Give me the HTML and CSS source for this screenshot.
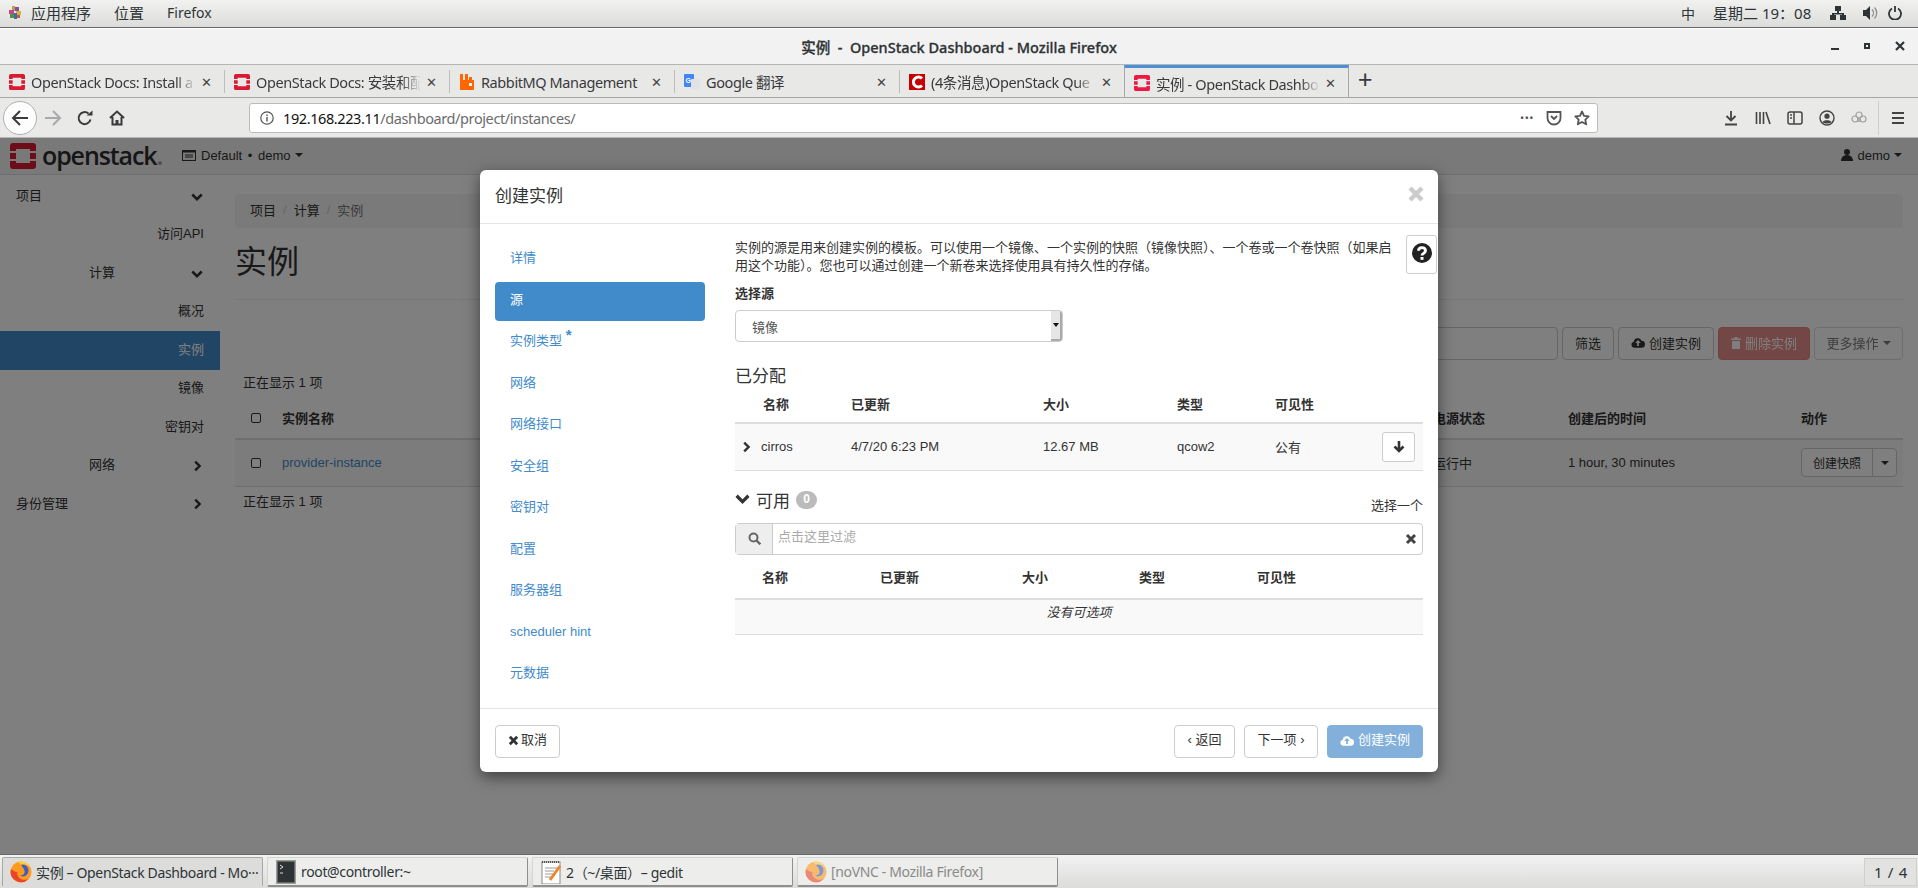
FILE: index.html
```html
<!DOCTYPE html>
<html lang="zh-CN">
<head>
    <meta charset="UTF-8">
    <title>实例 - OpenStack Dashboard</title>
    <link rel="stylesheet" href="styles.css">
</head>
<body>

    <svg class="sprite" width="0" height="0">
        <symbol id="os-logo" viewBox="0 0 26 26">
            <path fill="currentColor" d="M3 0h20a3 3 0 0 1 3 3v5h-6V6H6v2H0V3a3 3 0 0 1 3-3zM0 10h6v6H0zM20 10h6v6h-6zM0 18h6v2h14v-2h6v5a3 3 0 0 1-3 3H3a3 3 0 0 1-3-3z"/>
        </symbol>
        <symbol id="firefox" viewBox="0 0 24 24">
            <circle cx="12" cy="12" r="11.5" fill="#ff9a1f"/>
            <path fill="#e8452c" d="M1 9a11.5 11.5 0 0 0 19 11C13 22 7 18 8 12 5 12 3 10 1 9z"/>
            <path fill="#3b5fc0" d="M12 4c5-1 9 3 8 8-1 4-5 6-9 4 3 0 5-2 5-4 0-3-2-5-4-8z"/>
            <path fill="#ffcf3a" d="M9 1c4-1 10 0 13 6-3-3-7-4-10-3z"/>
        </symbol>
        <symbol id="chev-down" viewBox="0 0 14 10">
            <path fill="none" stroke="currentColor" stroke-width="3" d="M1.5 1.5 7 7l5.5-5.5"/>
        </symbol>
        <symbol id="chev-right" viewBox="0 0 10 14">
            <path fill="none" stroke="currentColor" stroke-width="3" d="M1.5 1.5 7 7l-5.5 5.5"/>
        </symbol>
        <symbol id="cloud-up" viewBox="0 0 16 12">
            <path fill="currentColor" fill-rule="evenodd" d="M4 12a3.5 3.5 0 0 1-.8-6.9A4.6 4.6 0 0 1 12 4a4 4 0 0 1 0 8zM8 3 4.8 6.6H7V10h2V6.6h2.2z"/>
        </symbol>
        <symbol id="times" viewBox="0 0 12 12">
            <path fill="none" stroke="currentColor" stroke-width="3" d="M2 2l8 8M10 2l-8 8"/>
        </symbol>
    </svg>

    <div class="desktop">

        <!-- GNOME top bar -->
        <header class="topbar">
            <svg class="apps-icon" viewBox="0 0 14 14" width="14" height="14">
                <rect x="4" y="0" width="3" height="5" fill="#b9a04a"/>
                <rect x="7" y="1" width="4" height="4" fill="#8a4d9c"/>
                <rect x="1" y="4" width="5" height="4" fill="#c0478a"/>
                <rect x="8" y="5" width="5" height="4" fill="#d8b23a"/>
                <rect x="2" y="8" width="4" height="4" fill="#5a8f3d"/>
                <rect x="6" y="7" width="3" height="6" fill="#3f6bb0"/>
                <rect x="9" y="9" width="3" height="3" fill="#c9583a"/>
            </svg>
            <span class="topbar-menu">应用程序</span>
            <span class="topbar-menu">位置</span>
            <span class="topbar-menu">Firefox</span>
            <div class="topbar-right">
                <span class="ime">中</span>
                <span class="clock">星期二 19：08</span>
                <svg class="tray-net" viewBox="0 0 16 14" width="16" height="14">
                    <path fill="#2e3436" d="M5 0h6v5H9v2h5v2h2v5h-6V9h2V8.500H4V9h2v5H0V9h2V7h5V5H5z"/>
                </svg>
                <svg class="tray-vol" viewBox="0 0 16 14" width="16" height="14">
                    <path fill="#2e3436" d="M0 4h3l4-4v14l-4-4H0z"/>
                    <path fill="none" stroke="#8a8d88" stroke-width="1.300" d="M9 3.500a5 5 0 0 1 0 7M11.500 1.500a8 8 0 0 1 0 11"/>
                </svg>
                <svg class="tray-power" viewBox="0 0 14 14" width="14" height="14">
                    <path fill="none" stroke="#2e3436" stroke-width="1.800" d="M4 2.500a6 6 0 1 0 6 0M7 0v6"/>
                </svg>
            </div>
        </header>

        <!-- Window title -->
        <div class="titlebar">
            <span class="window-title">实例 &nbsp;-&nbsp; OpenStack Dashboard - Mozilla Firefox</span>
            <div class="window-controls">
                <span class="win-min"></span>
                <span class="win-max"></span>
                <svg class="win-close" viewBox="0 0 10 10" width="10" height="10">
                    <path fill="none" stroke="#2e3436" stroke-width="2.200" d="M1 1l8 8M9 1l-8 8"/>
                </svg>
            </div>
        </div>

        <!-- Tabs -->
        <div class="tabstrip">
            <div class="tab">
                <svg class="favicon favicon-os"><use href="#os-logo"/></svg>
                <span class="tab-label">OpenStack Docs: Install a</span>
                <span class="tab-close">✕</span>
            </div>
            <div class="tab">
                <svg class="favicon favicon-os"><use href="#os-logo"/></svg>
                <span class="tab-label">OpenStack Docs: 安装和配</span>
                <span class="tab-close">✕</span>
            </div>
            <div class="tab">
                <svg class="favicon" viewBox="0 0 16 16">
                    <path fill="#f60" d="M1 0h3v6h2V0h3v6h1V3h3v3h2v10H1z"/>
                    <rect x="10" y="9" width="3" height="3" fill="#fff"/>
                </svg>
                <span class="tab-label tab-label-full">RabbitMQ Management</span>
                <span class="tab-close">✕</span>
            </div>
            <div class="tab">
                <svg class="favicon" viewBox="0 0 16 16">
                    <rect x="0" y="0" width="10" height="13" rx="1" fill="#4285f4"/>
                    <rect x="7" y="5" width="9" height="11" rx="1" fill="#dfe3e8"/>
                    <text x="1.500" y="9" font-size="7" fill="#fff" class="favicon-g">G</text>
                </svg>
                <span class="tab-label tab-label-full">Google 翻译</span>
                <span class="tab-close">✕</span>
            </div>
            <div class="tab">
                <svg class="favicon" viewBox="0 0 16 16">
                    <rect width="16" height="16" fill="#c90000"/>
                    <path fill="none" stroke="#fff" stroke-width="3" d="M13 4.500a5 5 0 1 0 0 7"/>
                </svg>
                <span class="tab-label">(4条消息)OpenStack Que</span>
                <span class="tab-close">✕</span>
            </div>
            <div class="tab tab-active">
                <svg class="favicon favicon-os-bright"><use href="#os-logo"/></svg>
                <span class="tab-label">实例 - OpenStack Dashbo</span>
                <span class="tab-close">✕</span>
            </div>
            <span class="tab-new">+</span>
        </div>

        <!-- Browser toolbar -->
        <div class="navbar-ff">
            <span class="ff-back">
                <svg viewBox="0 0 18 18" width="18" height="18">
                    <path fill="none" stroke="#3b3b3d" stroke-width="2" d="M17 9H2M9 2 2 9l7 7"/>
                </svg>
            </span>
            <svg class="ff-forward" viewBox="0 0 18 18" width="18" height="18">
                <path fill="none" stroke="#a9a9ab" stroke-width="2" d="M1 9h15M9 2l7 7-7 7"/>
            </svg>
            <svg class="ff-reload" viewBox="0 0 16 16" width="16" height="16">
                <path fill="none" stroke="#3b3b3d" stroke-width="2" d="M13.500 9.500A6 6 0 1 1 11.500 3.500"/>
                <path fill="#3b3b3d" d="M9.500 5.500h6v-5z"/>
            </svg>
            <svg class="ff-home" viewBox="0 0 16 16" width="16" height="16">
                <path fill="none" stroke="#3b3b3d" stroke-width="2" d="M1 8l7-6.500L15 8M3.500 7v7.500h9V7"/>
                <rect x="6.500" y="10" width="3" height="5" fill="#3b3b3d"/>
            </svg>
            <div class="urlbar">
                <svg class="url-info" viewBox="0 0 14 14" width="14" height="14">
                    <circle cx="7" cy="7" r="6.200" fill="none" stroke="#555" stroke-width="1.200"/>
                    <path fill="#555" d="M6.300 6h1.400v4.500H6.300zM6.300 3.500h1.400v1.400H6.300z"/>
                </svg>
                <span class="url-text"><b>192.168.223.11</b>/dashboard/project/instances/</span>
                <span class="url-more">•••</span>
                <svg class="url-pocket" viewBox="0 0 16 16" width="16" height="16">
                    <path fill="none" stroke="#555" stroke-width="1.800" d="M1.500 2h13v6a6.500 6.500 0 0 1-13 0z"/>
                    <path fill="none" stroke="#555" stroke-width="1.800" d="M5 6l3 3 3-3"/>
                </svg>
                <svg class="url-star" viewBox="0 0 16 16" width="16" height="16">
                    <path fill="none" stroke="#555" stroke-width="1.800" stroke-linejoin="round" d="M8 1.500l2 4.300 4.700.6-3.400 3.200.9 4.700L8 12l-4.200 2.300.9-4.700L1.300 6.400 6 5.800z"/>
                </svg>
            </div>
            <div class="ff-tools">
                <svg viewBox="0 0 16 16" width="16" height="16">
                    <path fill="none" stroke="#444" stroke-width="1.800" d="M8 1v9M3.500 6 8 10.500 12.500 6M2 14.500h12"/>
                </svg>
                <svg viewBox="0 0 16 16" width="16" height="16">
                    <path fill="none" stroke="#444" stroke-width="1.600" d="M1.500 2v12M5 2v12M8.500 2v12M11 2l4 12"/>
                </svg>
                <svg viewBox="0 0 16 16" width="16" height="16">
                    <rect x="1" y="2" width="14" height="12" rx="2" fill="none" stroke="#444" stroke-width="1.500"/>
                    <path fill="none" stroke="#444" stroke-width="1.500" d="M7 2v12M3 5h2M3 8h2"/>
                </svg>
                <svg viewBox="0 0 16 16" width="16" height="16">
                    <circle cx="8" cy="8" r="7" fill="none" stroke="#444" stroke-width="1.400"/>
                    <circle cx="8" cy="6.200" r="2.600" fill="#444"/>
                    <path fill="#444" d="M3.500 12c1-2.500 8-2.500 9 0-2 2-7 2-9 0z"/>
                </svg>
                <svg viewBox="0 0 16 16" width="16" height="16">
                    <g fill="none" stroke="#a0a0a0" stroke-width="1.200">
                        <circle cx="8" cy="5" r="3"/><circle cx="4" cy="9" r="3"/><circle cx="12" cy="9" r="3"/>
                        <circle cx="8" cy="10" r="1.300"/>
                    </g>
                </svg>
                <span class="ff-divider"></span>
                <svg viewBox="0 0 16 16" width="16" height="16">
                    <path fill="none" stroke="#444" stroke-width="1.800" d="M2 3h12M2 8h12M2 13h12"/>
                </svg>
            </div>
        </div>

        <!-- Horizon dashboard, dimmed by the modal backdrop -->
        <main class="page">
            <div class="os-nav">
                <svg class="os-logo"><use href="#os-logo"/></svg>
                <span class="os-wordmark">openstack<span class="os-dot">.</span></span>
                <svg class="os-project-icon" viewBox="0 0 14 11" width="14" height="11">
                    <rect x=".5" y=".5" width="13" height="10" fill="none" stroke="#333" stroke-width="1"/>
                    <path fill="#333" d="M0 0h14v2.500H0zM3 4.500h8v1H3zM3 6.500h8v1H3z"/>
                </svg>
                <span class="os-project">Default • demo</span>
                <span class="caret"></span>
                <span class="os-user">
                    <svg viewBox="0 0 12 12" width="12" height="12">
                        <circle cx="6" cy="3" r="3" fill="#333"/>
                        <path fill="#333" d="M0 12c0-8 12-8 12 0z"/>
                    </svg>
                    demo
                    <span class="caret"></span>
                </span>
            </div>

            <div class="os-main">
                <nav class="sidebar">
                    <div class="side-row side-top">项目
                        <svg class="side-chev"><use href="#chev-down"/></svg>
                    </div>
                    <div class="side-row side-link">访问API</div>
                    <div class="side-row side-group">计算
                        <svg class="side-chev"><use href="#chev-down"/></svg>
                    </div>
                    <div class="side-row side-link">概况</div>
                    <div class="side-row side-link side-active">实例</div>
                    <div class="side-row side-link">镜像</div>
                    <div class="side-row side-link">密钥对</div>
                    <div class="side-row side-group">网络
                        <svg class="side-chev-r"><use href="#chev-right"/></svg>
                    </div>
                    <div class="side-row side-top">身份管理
                        <svg class="side-chev-r"><use href="#chev-right"/></svg>
                    </div>
                </nav>

                <section class="content">
                    <div class="breadcrumb">
                        <span>项目</span><i>/</i><span>计算</span><i>/</i><span class="crumb-last">实例</span>
                    </div>
                    <h1 class="page-title">实例</h1>
                    <div class="actions">
                        <span class="fake-input"></span>
                        <span class="btn-bg btn-filter">筛选</span>
                        <span class="btn-bg btn-launch"><svg class="btn-icon"><use href="#cloud-up"/></svg>创建实例</span>
                        <span class="btn-bg btn-bg-danger">
                            <svg class="btn-trash" viewBox="0 0 10 12" width="10" height="12">
                                <path fill="currentColor" d="M3.500 0h3v1.500H10V3H0V1.500h3.500zM1 4h8v8H1z"/>
                            </svg>
                            删除实例
                        </span>
                        <span class="btn-bg btn-bg-muted">更多操作 <span class="caret"></span></span>
                    </div>
                    <div class="count">正在显示 1 项</div>
                    <table class="instances">
                        <colgroup>
                            <col class="col-check"><col class="col-name"><col class="col-status">
                            <col class="col-age"><col class="col-action">
                        </colgroup>
                        <thead>
                            <tr>
                                <th><span class="checkbox"></span></th>
                                <th>实例名称</th>
                                <th>电源状态</th>
                                <th>创建后的时间</th>
                                <th>动作</th>
                            </tr>
                        </thead>
                        <tbody>
                            <tr>
                                <td><span class="checkbox"></span></td>
                                <td><a class="inst-link">provider-instance</a></td>
                                <td>运行中</td>
                                <td>1 hour, 30 minutes</td>
                                <td>
                                    <span class="split-btn"><span>创建快照</span><span class="split-caret"><span class="caret"></span></span></span>
                                </td>
                            </tr>
                        </tbody>
                    </table>
                    <div class="count count-bottom">正在显示 1 项</div>
                </section>
            </div>

            <div class="backdrop"></div>

            <!-- Launch instance dialog -->
            <div class="modal">
                <div class="modal-head">
                    <h4>创建实例</h4>
                    <svg class="modal-close"><use href="#times"/></svg>
                </div>
                <div class="modal-body">
                    <ul class="wizard">
                        <li>详情</li>
                        <li class="wizard-active">源</li>
                        <li>实例类型 <sup>*</sup></li>
                        <li>网络</li>
                        <li>网络接口</li>
                        <li>安全组</li>
                        <li>密钥对</li>
                        <li>配置</li>
                        <li>服务器组</li>
                        <li>scheduler hint</li>
                        <li>元数据</li>
                    </ul>
                    <div class="pane">
                        <p class="pane-intro">实例的源是用来创建实例的模板。可以使用一个镜像、一个实例的快照（镜像快照）、一个卷或一个卷快照（如果启用这个功能）。您也可以通过创建一个新卷来选择使用具有持久性的存储。</p>
                        <label class="pane-label">选择源</label>
                        <div class="select">
                            <span>镜像</span>
                            <span class="select-arrow"></span>
                        </div>
                        <h5 class="pane-heading">已分配</h5>
                        <table class="grid grid-allocated">
                            <colgroup>
                                <col class="a1"><col class="a2"><col class="a3"><col class="a4"><col class="a5"><col>
                            </colgroup>
                            <thead>
                                <tr><th>名称</th><th>已更新</th><th>大小</th><th>类型</th><th>可见性</th><th></th></tr>
                            </thead>
                            <tbody>
                                <tr>
                                    <td><svg class="row-chev"><use href="#chev-right"/></svg>cirros</td>
                                    <td>4/7/20 6:23 PM</td>
                                    <td>12.67 MB</td>
                                    <td>qcow2</td>
                                    <td>公有</td>
                                    <td class="cell-btn">
                                        <span class="down-btn">
                                            <svg viewBox="0 0 12 12" width="12" height="12">
                                                <path fill="none" stroke="#333" stroke-width="2.600" d="M6 0v10M1.500 5.500 6 10l4.500-4.500"/>
                                            </svg>
                                        </span>
                                    </td>
                                </tr>
                            </tbody>
                        </table>
                        <div class="avail-head">
                            <svg class="avail-chev"><use href="#chev-down"/></svg>
                            <span class="avail-title">可用</span>
                            <span class="badge">0</span>
                            <span class="avail-pick">选择一个</span>
                        </div>
                        <div class="filter">
                            <span class="filter-addon">
                                <svg viewBox="0 0 13 13" width="13" height="13">
                                    <circle cx="5.500" cy="5.500" r="4" fill="none" stroke="#666" stroke-width="2"/>
                                    <path stroke="#666" stroke-width="2.400" d="M8.500 8.500l3.800 3.800"/>
                                </svg>
                            </span>
                            <span class="filter-text">点击这里过滤</span>
                            <svg class="filter-clear"><use href="#times"/></svg>
                        </div>
                        <table class="grid grid-available">
                            <colgroup>
                                <col class="b1"><col class="b2"><col class="b3"><col class="b4"><col>
                            </colgroup>
                            <thead>
                                <tr><th>名称</th><th>已更新</th><th>大小</th><th>类型</th><th>可见性</th></tr>
                            </thead>
                            <tbody>
                                <tr><td colspan="5" class="empty">没有可选项</td></tr>
                            </tbody>
                        </table>
                    </div>
                    <span class="help-btn">
                        <svg viewBox="0 0 20 20" width="20" height="20">
                            <circle cx="10" cy="10" r="10" fill="#222"/>
                            <path fill="none" stroke="#fff" stroke-width="2.800" d="M6.500 7.800c0-4.300 7-4.300 7 0 0 2.500-3.500 2.500-3.500 4.700"/>
                            <rect x="8.500" y="14" width="3" height="2.800" fill="#fff"/>
                        </svg>
                    </span>
                </div>
                <div class="modal-foot">
                    <span class="btn"><svg class="btn-x"><use href="#times"/></svg>取消</span>
                    <span class="foot-right">
                        <span class="btn btn-back">‹ 返回</span>
                        <span class="btn btn-next">下一项 ›</span>
                        <span class="btn btn-primary"><svg class="btn-icon"><use href="#cloud-up"/></svg>创建实例</span>
                    </span>
                </div>
            </div>
        </main>

        <!-- Window list -->
        <footer class="taskbar">
            <div class="task task-active">
                <svg class="task-icon"><use href="#firefox"/></svg>
                <span>实例 – OpenStack Dashboard - Mo···</span>
            </div>
            <div class="task">
                <svg class="task-icon" viewBox="0 0 22 24">
                    <rect x="1" y="0" width="20" height="24" fill="#9a9d98"/>
                    <rect x="2.500" y="1.500" width="17" height="21" fill="#2e3436"/>
                    <path fill="none" stroke="#ddd" d="M5 5l3 2-3 2M5 13h3"/>
                </svg>
                <span>root@controller:~</span>
            </div>
            <div class="task">
                <svg class="task-icon" viewBox="0 0 22 24">
                    <rect x="2" y="2" width="18" height="22" fill="#fff" stroke="#888"/>
                    <path stroke="#999" d="M5 8h12M5 11h9M5 14h9M5 17h7"/>
                    <path stroke="#555" stroke-width="2" stroke-dasharray="1 1" d="M2 2h18"/>
                    <path stroke="#e8892c" stroke-width="3" d="M20 6 10 20"/>
                </svg>
                <span>2（~/桌面）– gedit</span>
            </div>
            <div class="task task-min">
                <svg class="task-icon"><use href="#firefox"/></svg>
                <span>[noVNC - Mozilla Firefox]</span>
            </div>
            <div class="pager">1 / 4</div>
        </footer>
    </div>

</body>
</html>
```

FILE: styles.css
```css
/* Base */
* {
    box-sizing: border-box;
}

html, body {
    margin: 0;
    height: 100%;
    overflow: hidden;
}

body {
    font-family: "Noto Sans", "Noto Sans CJK SC", sans-serif;
    font-size: 15px;
    color: #2e3436;
}

.sprite {
    position: absolute;
}

.desktop {
    width: 1918px;
    height: 888px;
    display: flex;
    flex-direction: column;
}

/* Top bar */
.topbar {
    height: 28px;
    flex: none;
    display: flex;
    align-items: center;
    padding-left: 8px;
    padding-bottom: 2px;
    background: linear-gradient(#f1f1f0, #dcdcdb);
    border-bottom: 1px solid #66686a;
    font-size: 15px;
}

.apps-icon {
    margin-right: 9px;
}

.topbar-menu {
    margin-right: 23px;
    font-family: "Noto Sans CJK SC", sans-serif;
}

.topbar-menu:last-of-type {
    font-family: "Noto Sans", sans-serif;
    font-size: 14px;
}

.topbar-right {
    margin-left: auto;
    display: flex;
    align-items: center;
    padding-right: 16px;
}

.ime {
    margin-right: 18px;
    font-size: 14px;
}

.clock {
    width: 108px;
    font-size: 15px;
}

.tray-net {
    margin: 0 17px 0 9px;
}

.tray-vol {
    margin-right: 9px;
}

/* Title bar */
.titlebar {
    height: 36px;
    flex: none;
    position: relative;
    display: flex;
    align-items: center;
    justify-content: center;
    background: #f2f2f2;
    border-top: 1px solid #fff;
    font-size: 14.500px;
    font-weight: 500;
}

.window-title {
    -webkit-text-stroke: .3px #2e3436;
}

.window-controls {
    position: absolute;
    right: 13px;
    top: 12px;
    display: flex;
    align-items: center;
    gap: 25px;
}

.win-min {
    width: 8px;
    height: 2px;
    margin-top: 6px;
    background: #2e3436;
}

.win-max {
    width: 6px;
    height: 6px;
    border: 2px solid #2e3436;
}

/* Tabs */
.tabstrip {
    height: 34px;
    flex: none;
    display: flex;
    align-items: stretch;
    background: #e8e8e7;
    border-top: 1px solid #b5b5b3;
    border-bottom: 1px solid #a7a7a5;
    font-size: 14.500px;
    letter-spacing: -.4px;
    color: #3a3a3c;
}

.tab {
    width: 225px;
    flex: none;
    position: relative;
    display: flex;
    align-items: center;
    padding: 0 10px 0 9px;
    border-right: 1px solid #bdbdbb;
    margin: 5px 0 4px;
}

.tab-active {
    margin: 0 0 -1px;
    border-top: 3px solid #4a90d9;
    border-left: 1px solid #a7a7a5;
    border-right: 1px solid #a7a7a5;
    margin-left: -1px;
}

.favicon {
    width: 16px;
    height: 16px;
    flex: none;
    margin-right: 6px;
}

.favicon-os {
    color: #da1a32;
}

.favicon-os-bright {
    color: #ed1944;
}

.favicon-g {
    font-family: "Liberation Sans", sans-serif;
    font-weight: bold;
}

.tab-label {
    flex: 1;
    overflow: hidden;
    white-space: nowrap;
    -webkit-mask-image: linear-gradient(to right, #000 88%, transparent);
    mask-image: linear-gradient(to right, #000 88%, transparent);
}

.tab-label-full {
    -webkit-mask-image: none;
    mask-image: none;
}

.tab-close {
    width: 16px;
    margin-left: 2px;
    font-size: 13px;
    text-align: center;
    color: #444;
}

.tab-new {
    width: 32px;
    text-align: center;
    font-size: 26px;
    line-height: 28px;
}

/* Browser toolbar */
.navbar-ff {
    height: 40px;
    flex: none;
    display: flex;
    align-items: center;
    padding-left: 3px;
    background: #e9e9e8;
    border-bottom: 1px solid #b5b5b3;
}

.ff-back {
    width: 34px;
    height: 34px;
    display: flex;
    align-items: center;
    justify-content: center;
    background: #fdfdfd;
    border: 1px solid #b1b1b1;
    border-radius: 50%;
}

.ff-forward {
    margin-left: 7px;
}

.ff-reload {
    margin-left: 15px;
}

.ff-home {
    margin-left: 16px;
}

.urlbar {
    width: 1349px;
    height: 30px;
    margin-left: 124px;
    display: flex;
    align-items: center;
    padding: 0 7px 0 10px;
    background: #fff;
    border: 1px solid #bcbcbc;
    border-radius: 3px;
    font-size: 14.500px;
    letter-spacing: -.4px;
    color: #6c6c6e;
}

.url-text {
    margin-left: 9px;
}

.url-text b {
    font-weight: normal;
    color: #111;
}

.url-more {
    margin-left: auto;
    font-size: 11px;
    color: #555;
    letter-spacing: .5px;
}

.url-pocket {
    margin-left: 12px;
}

.url-star {
    margin-left: 12px;
}

.ff-tools {
    margin-left: 125px;
    display: flex;
    align-items: center;
    gap: 16px;
}

.ff-divider {
    width: 1px;
    height: 34px;
    margin: 0 -5px;
    background: #cfcfcd;
}

/* Dashboard */
.page {
    flex: 1;
    position: relative;
    min-height: 0;
    background: #fff;
    font-family: "Liberation Sans", "Noto Sans CJK SC", sans-serif;
    font-size: 13px;
    color: #333;
    overflow: hidden;
}

.os-nav {
    height: 37px;
    display: flex;
    align-items: center;
    padding: 0 16px 2px 10px;
    background: #f2f2f2;
    border-bottom: 1px solid #ddd;
    color: #333;
}

.os-logo {
    width: 26px;
    height: 26px;
    margin-top: 2px;
    color: #da1a32;
    margin-right: 6px;
}

.os-wordmark {
    width: 140px;
    font-family: "Open Sans", sans-serif;
    font-size: 25px;
    font-weight: 600;
    letter-spacing: -1.1px;
    color: #2c2c2e;
    line-height: 30px;
}

.os-dot {
    color: #999;
}

.os-project-icon {
    margin-right: 5px;
}

.os-project {
    margin-right: 5px;
    word-spacing: 2px;
}

.caret {
    display: inline-block;
    width: 0;
    height: 0;
    border-top: 4px solid currentColor;
    border-left: 4px solid transparent;
    border-right: 4px solid transparent;
    vertical-align: middle;
}

.os-user {
    margin-left: auto;
    display: flex;
    align-items: center;
    gap: 4px;
}

.os-main {
    display: flex;
}

.sidebar {
    width: 220px;
    flex: none;
    padding-top: 2px;
}

.side-row {
    height: 38.500px;
    position: relative;
    display: flex;
    align-items: center;
    padding-bottom: 4px;
}

.side-top {
    padding-left: 16px;
}

.side-group {
    padding-left: 89px;
}

.side-link {
    justify-content: flex-end;
    padding-right: 16px;
}

.side-active {
    background: #428bca;
    color: #fff;
}

.side-chev {
    position: absolute;
    right: 17px;
    top: 16px;
    width: 12px;
    height: 9px;
    color: #333;
}

.side-chev-r {
    position: absolute;
    right: 18px;
    top: 13px;
    width: 8px;
    height: 12px;
    color: #333;
}

.content {
    flex: 1;
    min-width: 0;
    padding: 19px 15px 0;
}

.breadcrumb {
    height: 34px;
    display: flex;
    align-items: center;
    gap: 7px;
    padding: 0 15px 3px;
    background: #f5f5f5;
    border-radius: 4px;
}

.breadcrumb i {
    font-style: normal;
    color: #ccc;
}

.crumb-last {
    color: #777;
}

.page-title {
    height: 72px;
    margin: 0;
    padding-top: 13px;
    border-bottom: 1px solid #eee;
    font-size: 32px;
    font-weight: 400;
    line-height: 42px;
}

.actions {
    display: flex;
    justify-content: flex-end;
    gap: 4px;
    margin-top: 27px;
}

.fake-input {
    width: 360px;
    height: 33px;
    border: 1px solid #ccc;
    border-radius: 4px;
    background: #fff;
}

.btn-bg {
    width: 89px;
    height: 33px;
    display: flex;
    align-items: center;
    justify-content: center;
    gap: 4px;
    padding-bottom: 2px;
    background: #fff;
    border: 1px solid #ccc;
    border-radius: 4px;
}

.btn-filter {
    width: 52px;
}

.btn-launch {
    width: 96px;
}

.btn-bg-danger {
    width: 92px;
    background: #d9534f;
    border-color: #d43f3a;
    color: #fff;
    opacity: .65;
}

.btn-bg-muted {
    opacity: .65;
}

.btn-icon {
    width: 14px;
    height: 11px;
    flex: none;
}

.count {
    margin-top: 14px;
    padding-left: 8px;
    height: 18px;
    line-height: 18px;
}

.count-bottom {
    margin-top: 6px;
}

.instances {
    width: 100%;
    margin-top: 5px;
    border-collapse: collapse;
    table-layout: fixed;
}

.col-check {
    width: 47px;
}

.col-name {
    width: 1151px;
}

.col-status {
    width: 135px;
}

.col-age {
    width: 233px;
}

.instances th {
    height: 42px;
    padding: 0;
    text-align: left;
    border-bottom: 2px solid #ddd;
}

.instances td {
    height: 47px;
    padding: 0;
    background: #f9f9f9;
    border-bottom: 1px solid #ddd;
}

.checkbox {
    display: block;
    width: 10px;
    height: 10px;
    margin-left: 16px;
    background: #fff;
    border: 1px solid #333;
    border-radius: 2px;
}

.inst-link {
    color: #428bca;
}

.split-btn {
    display: inline-flex;
    align-items: center;
    height: 29px;
    font-size: 12px;
    background: #fff;
    border: 1px solid #ccc;
    border-radius: 4px;
}

.split-btn > span:first-child {
    padding: 0 11px;
}

.split-caret {
    width: 24px;
    height: 27px;
    display: flex;
    align-items: center;
    justify-content: center;
    border-left: 1px solid #ccc;
}

.backdrop {
    position: absolute;
    inset: 0;
    background: rgba(0, 0, 0, .5);
}

/* Launch instance dialog */
.modal {
    position: absolute;
    top: 32px;
    left: 480px;
    width: 958px;
    height: 602px;
    display: flex;
    flex-direction: column;
    background: #fff;
    border-radius: 6px;
    box-shadow: 0 5px 15px rgba(0, 0, 0, .5);
}

.modal-head {
    height: 54px;
    flex: none;
    position: relative;
    border-bottom: 1px solid #e5e5e5;
}

.modal-head h4 {
    margin: 0;
    padding: 16px 15px 0;
    font-size: 17px;
    font-weight: 400;
    line-height: 22px;
}

.modal-close {
    position: absolute;
    right: 13px;
    top: 15px;
    width: 18px;
    height: 18px;
    color: #ccc;
}

.modal-body {
    flex: 1;
    min-height: 0;
    position: relative;
    display: flex;
    padding-left: 15px;
}

.wizard {
    width: 210px;
    flex: none;
    margin: 0;
    padding: 16px 0 0;
    list-style: none;
    color: #428bca;
}

.wizard li {
    height: 39px;
    margin-bottom: 2.500px;
    padding: 10px 15px 0;
    line-height: 16px;
    border-radius: 4px;
}

.wizard sup {
    font-size: 15px;
    font-weight: bold;
    line-height: 0;
}

.wizard-active {
    background: #428bca;
    color: #fff;
}

.pane {
    width: 688px;
    margin-left: 30px;
    padding-top: 15px;
}

.pane-intro {
    width: 668px;
    margin: 0;
    line-height: 18px;
}

.pane-label {
    display: block;
    margin-top: 10px;
    font-weight: bold;
    line-height: 18px;
}

.select {
    width: 328px;
    height: 32px;
    margin-top: 7px;
    display: flex;
    align-items: center;
    justify-content: space-between;
    padding-left: 16px;
    background: #fff;
    border: 1px solid #ccc;
    border-radius: 4px;
    color: #555;
    overflow: hidden;
}

.select-arrow {
    width: 11px;
    height: 30px;
    display: flex;
    align-items: center;
    justify-content: center;
    background: #e6e6e6;
    border-right: 2px solid #aaa;
    border-bottom: 2px solid #aaa;
}

.select-arrow::after {
    content: "";
    border-top: 4px solid #111;
    border-left: 3px solid transparent;
    border-right: 3px solid transparent;
}

.pane-heading {
    margin: 24px 0 0;
    font-size: 17px;
    font-weight: 400;
    line-height: 22px;
}

.grid {
    width: 100%;
    border-collapse: collapse;
    table-layout: fixed;
}

.grid th {
    padding: 0;
    text-align: left;
    border-bottom: 2px solid #ddd;
}

.grid td {
    padding: 0;
    background: #f9f9f9;
    border-bottom: 1px solid #ddd;
}

.grid-allocated th {
    height: 35px;
    padding-bottom: 4px;
}

.grid-allocated td {
    height: 47px;
}

.a1 {
    width: 116px;
}

.a2 {
    width: 192px;
}

.a3 {
    width: 134px;
}

.a4 {
    width: 98px;
}

.a5 {
    width: 100px;
}

.grid-allocated th:first-child {
    padding-left: 28px;
}

.row-chev {
    width: 8px;
    height: 12px;
    margin: 0 10px 0 8px;
    vertical-align: -2px;
    color: #333;
}

.cell-btn {
    text-align: left;
}

.down-btn {
    width: 33px;
    height: 30px;
    margin-left: 7px;
    display: flex;
    align-items: center;
    justify-content: center;
    background: #fff;
    border: 1px solid #ccc;
    border-radius: 3px;
}

.avail-head {
    height: 28px;
    margin-top: 15px;
    position: relative;
    display: flex;
    align-items: center;
}

.avail-chev {
    width: 15px;
    height: 11px;
    color: #333;
}

.avail-title {
    margin-left: 6px;
    font-size: 17px;
}

.badge {
    width: 21px;
    height: 18px;
    margin-left: 6px;
    text-align: center;
    font-size: 12px;
    font-weight: bold;
    line-height: 16px;
    color: #fff;
    background: #bbb;
    border-radius: 10px;
}

.avail-pick {
    margin-left: auto;
    padding-top: 10px;
}

.filter {
    height: 32px;
    margin-top: 9px;
    position: relative;
    display: flex;
    align-items: center;
    border: 1px solid #ccc;
    border-radius: 4px;
}

.filter-addon {
    width: 37px;
    height: 30px;
    display: flex;
    align-items: center;
    justify-content: center;
    background: #eee;
    border-right: 1px solid #ccc;
}

.filter-text {
    margin-left: 5px;
    padding-bottom: 6px;
    color: #aaa;
}

.filter-clear {
    position: absolute;
    right: 5px;
    top: 9px;
    width: 12px;
    height: 12px;
    color: #444;
}

.grid-available th {
    height: 44px;
}

.grid-available td {
    height: 36px;
}

.b1 {
    width: 145px;
}

.b2 {
    width: 142px;
}

.b3 {
    width: 117px;
}

.b4 {
    width: 118px;
}

.grid-available th:first-child {
    padding-left: 27px;
}

.empty {
    text-align: center;
    font-style: italic;
}

.grid-available .empty {
    padding-bottom: 11px;
}

.help-btn {
    position: absolute;
    right: 1px;
    top: 11px;
    width: 31px;
    height: 39px;
    display: flex;
    align-items: center;
    justify-content: center;
    padding-bottom: 4px;
    background: #fff;
    border: 1px solid #ccc;
    border-radius: 3px;
}

.modal-foot {
    height: 64px;
    flex: none;
    display: flex;
    align-items: center;
    justify-content: space-between;
    padding: 1px 15px 0;
    border-top: 1px solid #e5e5e5;
}

.foot-right {
    display: flex;
    gap: 9px;
}

.btn {
    height: 33px;
    display: flex;
    align-items: center;
    justify-content: center;
    padding: 0 12px 2px;
    background: #fff;
    border: 1px solid #ccc;
    border-radius: 4px;
    line-height: 16px;
}

.btn-x {
    width: 11px;
    height: 11px;
    margin-right: 2px;
}

.btn-back {
    width: 61px;
}

.btn-next {
    width: 74px;
}

.btn-primary {
    width: 96px;
    gap: 4px;
    padding: 0 0 2px;
    background: #82b0da;
    border-color: #82b0da;
    color: #fff;
}

/* Window list */
.taskbar {
    height: 34px;
    flex: none;
    display: flex;
    align-items: stretch;
    gap: 4px;
    padding: 2px 0 1px 2px;
    background: linear-gradient(#f2f2f2, #dcdcdb);
    border-top: 1px solid #66686a;
    font-size: 14px;
    letter-spacing: -.35px;
}

.task {
    width: 261px;
    flex: none;
    display: flex;
    align-items: center;
    gap: 4px;
    padding-left: 7px;
    white-space: nowrap;
    overflow: hidden;
    background: #ededec;
    border: 1px solid #d4d4d3;
    border-bottom: 2px solid #8f8f8d;
    border-right-color: #8f8f8d;
    border-radius: 2px;
}

.task-active {
    background: #dcdcdb;
    border: 1px solid #a8a8a6;
    border-bottom-color: #dcdcdb;
}

.task-min {
    color: #8a8a88;
}

.task-min .task-icon {
    opacity: .6;
}

.task-icon {
    width: 22px;
    height: 24px;
    flex: none;
}

.pager {
    width: 53px;
    margin: 1px 1px 1px auto;
    display: flex;
    align-items: center;
    justify-content: center;
    background: #e2e2e1;
    border: 1px solid #cfcfcd;
    font-size: 15px;
    word-spacing: 2px;
}
```
